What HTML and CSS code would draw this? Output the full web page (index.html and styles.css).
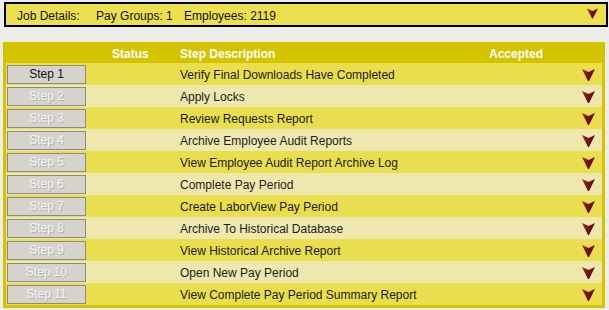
FILE: index.html
```html
<!DOCTYPE html>
<html>
<head>
<meta charset="utf-8">
<link rel="stylesheet" href="styles.css">
</head>
<body>
<svg class="defs" width="0" height="0"><defs><linearGradient id="ag" x1="0" y1="0" x2="1" y2="0.6"><stop offset="0" stop-color="#9a2a1e"/><stop offset="0.5" stop-color="#7a1410"/><stop offset="1" stop-color="#520808"/></linearGradient></defs></svg>
<div class="jobbar">
  <div class="jobinfo">
    <span class="jl">Job Details:</span>
    <span class="pg">Pay Groups: 1</span>
    <span class="em">Employees: 2119</span>
  </div>
  <svg class="arrow big" viewBox="0 0 13 12"><path d="M0 0 L6.5 3 L13 0 L7 12 L6 12 Z"/></svg>
</div>

<div class="steps">
  <div class="row head">
    <div></div>
    <div>Status</div>
    <div>Step Description</div>
    <div>Accepted</div>
  </div>
  <div class="row odd">
    <div><button class="btn on">Step 1</button></div><div></div>
    <div class="desc">Verify Final Downloads Have Completed</div>
    <div class="acc"><svg class="arrow" viewBox="0 0 13 12"><path d="M0 0 L6.5 3 L13 0 L7 12 L6 12 Z"/></svg></div>
  </div>
  <div class="row even">
    <div><button class="btn off">Step 2</button></div><div></div>
    <div class="desc">Apply Locks</div>
    <div class="acc"><svg class="arrow" viewBox="0 0 13 12"><path d="M0 0 L6.5 3 L13 0 L7 12 L6 12 Z"/></svg></div>
  </div>
  <div class="row odd">
    <div><button class="btn off">Step 3</button></div><div></div>
    <div class="desc">Review Requests Report</div>
    <div class="acc"><svg class="arrow" viewBox="0 0 13 12"><path d="M0 0 L6.5 3 L13 0 L7 12 L6 12 Z"/></svg></div>
  </div>
  <div class="row even">
    <div><button class="btn off">Step 4</button></div><div></div>
    <div class="desc">Archive Employee Audit Reports</div>
    <div class="acc"><svg class="arrow" viewBox="0 0 13 12"><path d="M0 0 L6.5 3 L13 0 L7 12 L6 12 Z"/></svg></div>
  </div>
  <div class="row odd">
    <div><button class="btn off">Step 5</button></div><div></div>
    <div class="desc">View Employee Audit Report Archive Log</div>
    <div class="acc"><svg class="arrow" viewBox="0 0 13 12"><path d="M0 0 L6.5 3 L13 0 L7 12 L6 12 Z"/></svg></div>
  </div>
  <div class="row even">
    <div><button class="btn off">Step 6</button></div><div></div>
    <div class="desc">Complete Pay Period</div>
    <div class="acc"><svg class="arrow" viewBox="0 0 13 12"><path d="M0 0 L6.5 3 L13 0 L7 12 L6 12 Z"/></svg></div>
  </div>
  <div class="row odd">
    <div><button class="btn off">Step 7</button></div><div></div>
    <div class="desc">Create LaborView Pay Period</div>
    <div class="acc"><svg class="arrow" viewBox="0 0 13 12"><path d="M0 0 L6.5 3 L13 0 L7 12 L6 12 Z"/></svg></div>
  </div>
  <div class="row even">
    <div><button class="btn off">Step 8</button></div><div></div>
    <div class="desc">Archive To Historical Database</div>
    <div class="acc"><svg class="arrow" viewBox="0 0 13 12"><path d="M0 0 L6.5 3 L13 0 L7 12 L6 12 Z"/></svg></div>
  </div>
  <div class="row odd">
    <div><button class="btn off">Step 9</button></div><div></div>
    <div class="desc">View Historical Archive Report</div>
    <div class="acc"><svg class="arrow" viewBox="0 0 13 12"><path d="M0 0 L6.5 3 L13 0 L7 12 L6 12 Z"/></svg></div>
  </div>
  <div class="row even">
    <div><button class="btn off">Step 10</button></div><div></div>
    <div class="desc">Open New Pay Period</div>
    <div class="acc"><svg class="arrow" viewBox="0 0 13 12"><path d="M0 0 L6.5 3 L13 0 L7 12 L6 12 Z"/></svg></div>
  </div>
  <div class="row odd">
    <div><button class="btn off">Step 11</button></div><div></div>
    <div class="desc">View Complete Pay Period Summary Report</div>
    <div class="acc"><svg class="arrow" viewBox="0 0 13 12"><path d="M0 0 L6.5 3 L13 0 L7 12 L6 12 Z"/></svg></div>
  </div>
</div>
</body>
</html>
```

FILE: styles.css
```css
html, body {
  margin: 0;
  padding: 0;
}
body {
  background: #edede9;
  font-family: "Liberation Sans", Arial, sans-serif;
  font-size: 12px;
  color: #1c1c1c;
  width: 609px;
  height: 310px;
  overflow: hidden;
}
.defs {
  position: absolute;
  width: 0;
  height: 0;
}
.jobbar {
  margin: 2px 1px 0 4px;
  height: 21px;
  border: 2px solid #000;
  background: #ece04f;
  display: flex;
  align-items: center;
  justify-content: space-between;
  padding: 0 8px 0 11px;
}
.jobinfo {
  padding-top: 3px;
  color: #111;
}
.jobinfo .jl { margin-right: 13px; }
.jobinfo .pg { margin-right: 8px; }
.arrow {
  width: 13px;
  height: 12px;
  display: block;
  fill: url(#ag);
}
.arrow.big {
  width: 11px;
  height: 11px;
  margin-top: -3px;
}
.steps {
  margin: 15px 4px 0 3px;
  border: 3px solid #d4c400;
  border-top: 0;
  background: #d4c400;
}
.row {
  display: grid;
  grid-template-columns: 106px 68px 309px 1fr;
  align-items: center;
  height: 22px;
}
.row.head {
  height: 21px;
  color: #fff;
  font-weight: bold;
  padding-top: 2px;
  box-sizing: border-box;
}
.row.odd { background: #e9de4d; }
.row.even { background: #eee8ae; }
.btn {
  display: block;
  margin-left: 1px;
  width: 79px;
  height: 19px;
  padding: 0;
  border: 1px solid #8a8a8a;
  background: #d6d3cc;
  font-family: "Liberation Sans", Arial, sans-serif;
  font-size: 12px;
  text-align: center;
  line-height: 17px;
}
.btn.on { color: #111; }
.btn.off {
  color: #f5f5f5;
  text-shadow: 1px 1px 0 #b0b0b0;
}
.desc {
  padding-top: 1px;
}
.acc {
  display: flex;
  justify-content: flex-end;
  padding-right: 7px;
  padding-top: 1px;
}
```
